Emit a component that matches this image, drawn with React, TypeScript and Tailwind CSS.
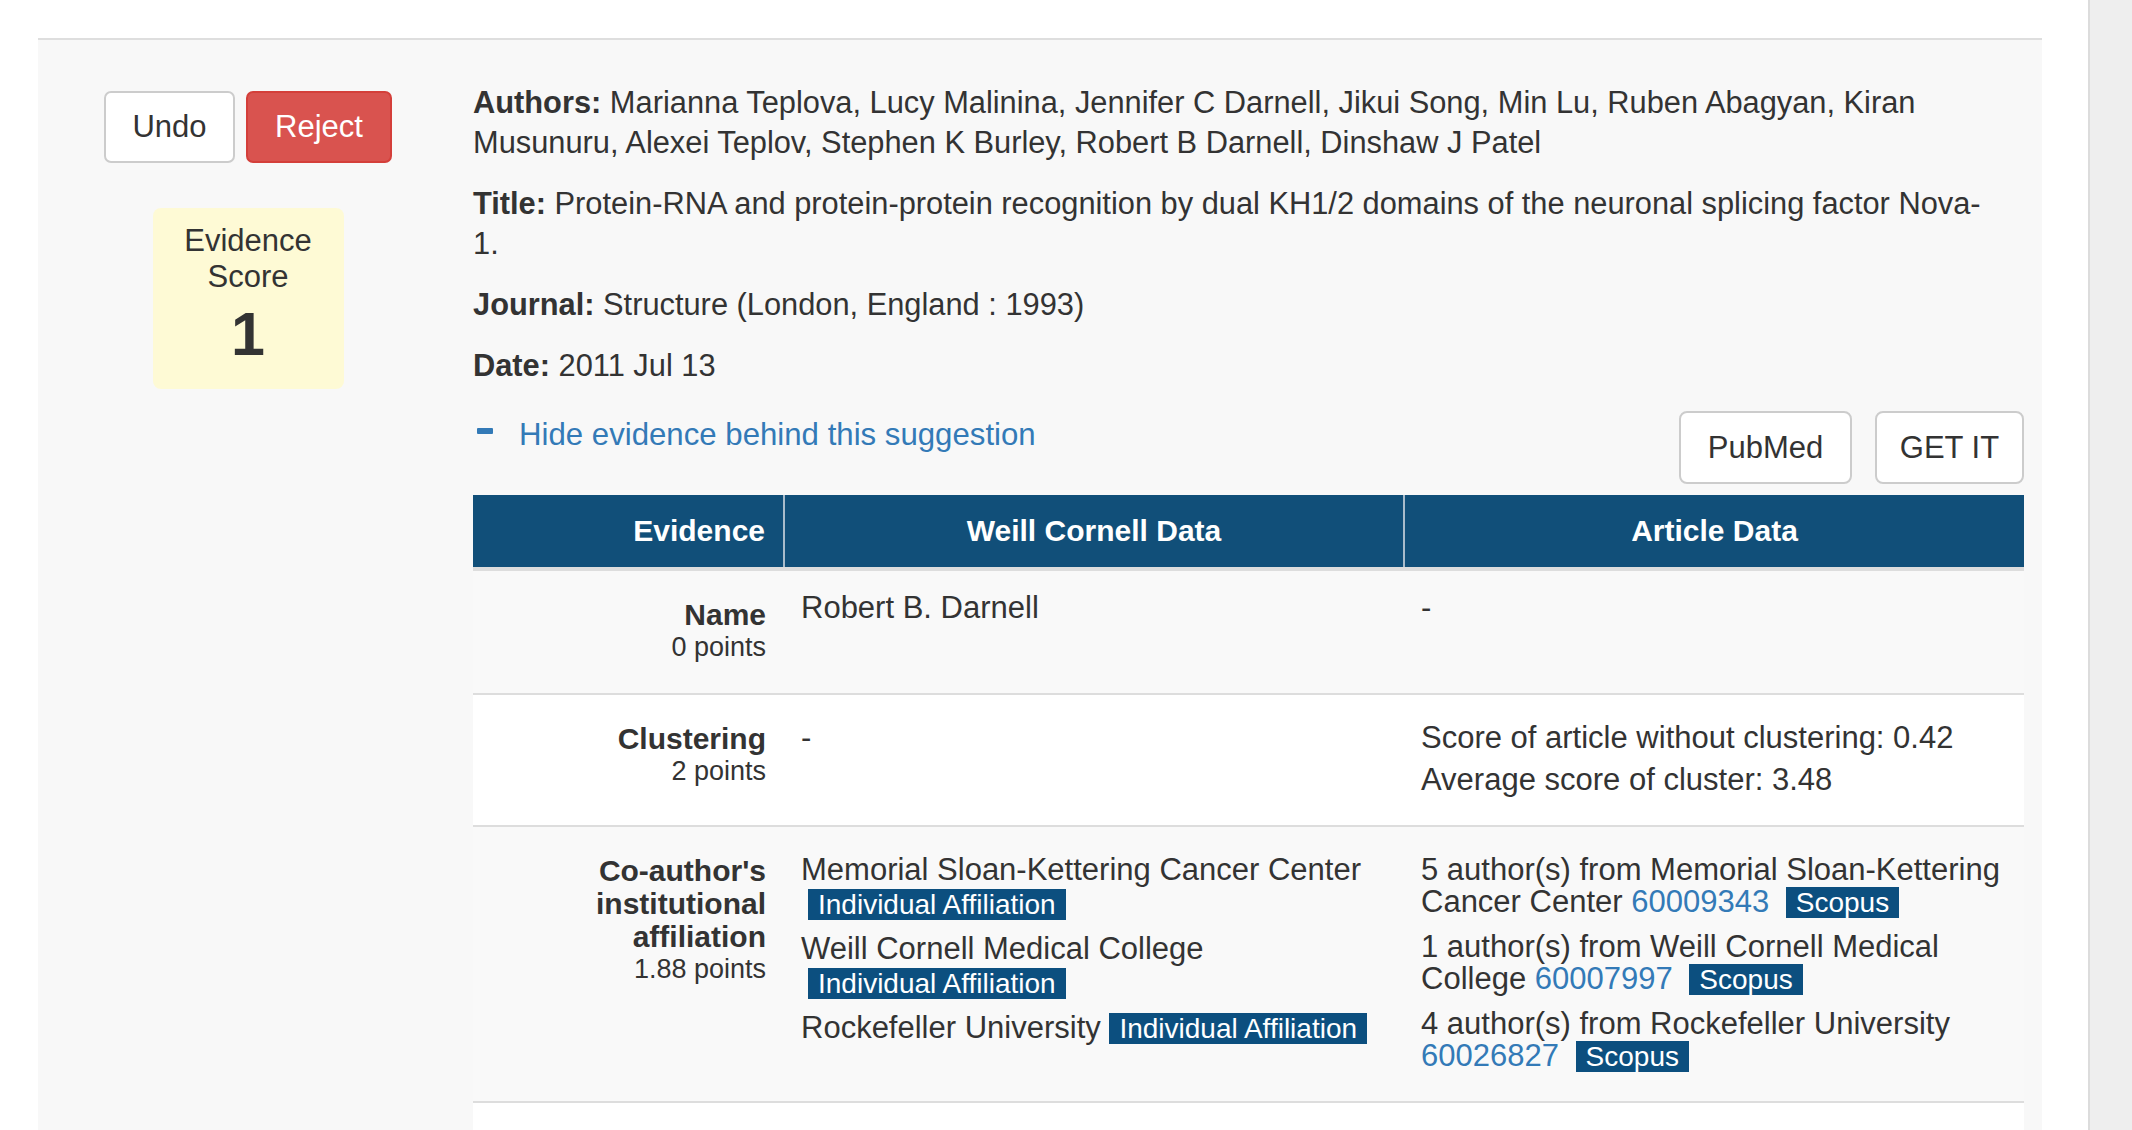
import React from "react";

type Affiliation = {
  name: string;
  wrapBadge: boolean;
};

type ArticleAffiliation = {
  text: string;
  scopusId: string;
};

const affiliations: Affiliation[] = [
  { name: "Memorial Sloan-Kettering Cancer Center", wrapBadge: true },
  { name: "Weill Cornell Medical College", wrapBadge: true },
  { name: "Rockefeller University", wrapBadge: false },
];

const articleAffiliations: ArticleAffiliation[] = [
  { text: "5 author(s) from Memorial Sloan-Kettering Cancer Center", scopusId: "60009343" },
  { text: "1 author(s) from Weill Cornell Medical College", scopusId: "60007997" },
  { text: "4 author(s) from Rockefeller University", scopusId: "60026827" },
];

function Badge({ children, className = "" }: { children: React.ReactNode; className?: string }) {
  return (
    <span
      className={`inline-block whitespace-nowrap bg-[#0c4f7f] px-[10px] text-[28px] leading-[31px] text-white ${className}`}
    >
      {children}
    </span>
  );
}

function OutlineButton({ label, width }: { label: string; width: string }) {
  return (
    <button
      type="button"
      className={`flex h-[73px] ${width} items-center justify-center rounded-[8px] border-2 border-[#cccccc] bg-white text-[31px] text-[#333]`}
    >
      {label}
    </button>
  );
}

function EvidenceLabel({ lines, points }: { lines: string[]; points: string }) {
  return (
    <td className="border-b-2 border-[#dddddd] pb-[29px] pr-[18px] pt-[27px] text-right align-top">
      {lines.map((l) => (
        <div key={l} className="text-[30px] font-bold leading-[33px]">
          {l}
        </div>
      ))}
      <div className="text-[27px] leading-[33px]">{points}</div>
    </td>
  );
}

const cell = "border-b-2 border-[#dddddd] px-[17px] pb-[29px] align-top leading-[32px]";

export default function App() {
  return (
    <div className="flex h-[1130px] w-full overflow-hidden bg-white font-['Liberation_Sans',Arial,sans-serif] text-[#333]">
      <div className="flex-1 pl-[38px] pr-[46px] pt-[38px]">
        <div className="flex h-full border-t-2 border-[#dedede] bg-[#f8f8f8]">
          {/* left: actions and score */}
          <div className="flex w-[420px] shrink-0 flex-col items-center pt-[51px]">
            <div className="flex gap-[11px]">
              <button
                type="button"
                className="flex h-[72px] w-[131px] items-center justify-center rounded-[7px] border-2 border-[#cccccc] bg-white text-[31px] text-[#333]"
              >
                Undo
              </button>
              <button
                type="button"
                className="flex h-[72px] w-[146px] items-center justify-center rounded-[7px] border-2 border-[#d43f3a] bg-[#d9534f] text-[31px] text-white"
              >
                Reject
              </button>
            </div>
            <div className="mt-[45px] h-[181px] w-[191px] rounded-[8px] bg-[#fefad5] pt-[15px] text-center">
              <div className="text-[31px] leading-[36px]">Evidence</div>
              <div className="text-[31px] leading-[36px]">Score</div>
              <div className="mt-[6px] text-[61px] font-bold leading-[66px]">1</div>
            </div>
          </div>

          {/* right: article details */}
          <div className="ml-[15px] mr-[18px] min-w-0 flex-1 pt-[43px] text-[30.8px] leading-[40px]">
            <p className="mb-[21px]">
              <b>Authors:</b> Marianna Teplova, Lucy Malinina, Jennifer C Darnell, Jikui Song, Min Lu, Ruben
              Abagyan, Kiran Musunuru, Alexei Teplov, Stephen K Burley, Robert B Darnell, Dinshaw J Patel
            </p>
            <p className="mb-[21px]">
              <b>Title:</b> Protein-RNA and protein-protein recognition by dual KH1/2 domains of the neuronal
              splicing factor Nova-
              <br />
              1.
            </p>
            <p className="mb-[21px]">
              <b>Journal:</b> Structure (London, England : 1993)
            </p>
            <p className="mb-[21px]">
              <b>Date:</b> 2011 Jul 13
            </p>

            <div className="mb-[11px] flex items-start justify-between">
              <a className="mt-[8px] flex items-start text-[31.2px] leading-[40px] text-[#337ab7]" href="#">
                <span className="ml-[4px] mt-[13px] inline-block h-[6px] w-[16px] rounded-[1px] bg-[#337ab7]" />
                <span className="ml-[26px]">Hide evidence behind this suggestion</span>
              </a>
              <div className="mt-[4px] flex gap-[23px]">
                <OutlineButton label="PubMed" width="w-[173px]" />
                <OutlineButton label="GET IT" width="w-[149px]" />
              </div>
            </div>

            <table className="w-full table-fixed border-collapse">
              <colgroup>
                <col className="w-[311px]" />
                <col className="w-[620px]" />
                <col className="w-[620px]" />
              </colgroup>
              <thead>
                <tr className="h-[74px] bg-[#114f79] text-[30px] font-bold leading-[40px] text-white">
                  <th className="border-b-4 border-[#dddddd] pr-[18px] text-right">Evidence</th>
                  <th className="border-b-4 border-l-2 border-b-[#dddddd] border-l-[#a9bccb] text-center">
                    Weill Cornell Data
                  </th>
                  <th className="border-b-4 border-l-2 border-b-[#dddddd] border-l-[#a9bccb] text-center">
                    Article Data
                  </th>
                </tr>
              </thead>
              <tbody className="text-[31px]">
                <tr className="bg-[#f9f9f9]">
                  <EvidenceLabel lines={["Name"]} points="0 points" />
                  <td className={`${cell} pt-[21px]`}>Robert B. Darnell</td>
                  <td className={`${cell} pt-[21px]`}>-</td>
                </tr>

                <tr className="bg-white">
                  <EvidenceLabel lines={["Clustering"]} points="2 points" />
                  <td className={`${cell} pt-[27px]`}>-</td>
                  <td className={`${cell} pt-[27px]`}>
                    <div className="mb-[10px]">Score of article without clustering: 0.42</div>
                    <div>Average score of cluster: 3.48</div>
                  </td>
                </tr>

                <tr className="bg-[#f9f9f9]">
                  <EvidenceLabel lines={["Co-author's", "institutional", "affiliation"]} points="1.88 points" />
                  <td className={`${cell} pt-[27px]`}>
                    {affiliations.map((a, i) => (
                      <div key={a.name} className={i < affiliations.length - 1 ? "mb-[13px]" : ""}>
                        {a.wrapBadge ? (
                          <>
                            <div>{a.name}</div>
                            <div className="pl-[7px] pt-[2px]">
                              <Badge>Individual Affiliation</Badge>
                            </div>
                          </>
                        ) : (
                          <>
                            {a.name} <Badge>Individual Affiliation</Badge>
                          </>
                        )}
                      </div>
                    ))}
                  </td>
                  <td className={`${cell} pt-[27px]`}>
                    {articleAffiliations.map((a, i) => (
                      <div key={a.scopusId} className={i < articleAffiliations.length - 1 ? "mb-[13px]" : ""}>
                        {a.text}{" "}
                        <a href="#" className="text-[#337ab7]">
                          {a.scopusId}
                        </a>{" "}
                        <Badge className="ml-[8px] px-[9px]">Scopus</Badge>
                      </div>
                    ))}
                  </td>
                </tr>

                {/* next row starts just above the fold */}
                <tr className="h-[120px] bg-white">
                  <td />
                  <td />
                  <td />
                </tr>
              </tbody>
            </table>
          </div>
        </div>
      </div>
      {/* scrollbar track */}
      <div className="w-[44px] shrink-0 border-l-2 border-[#dcdcdc] bg-[#eeeeee]" />
    </div>
  );
}
